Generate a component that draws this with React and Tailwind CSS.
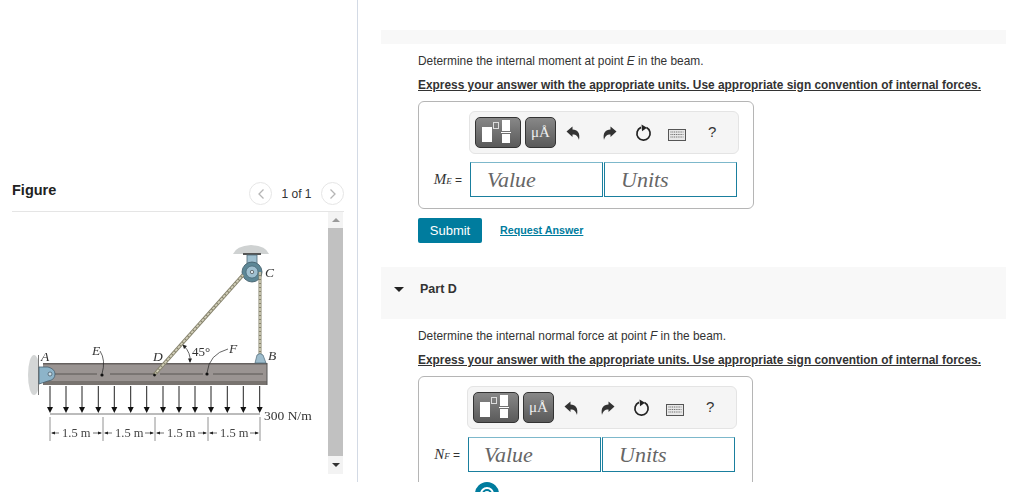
const sans = { fontFamily: '"Liberation Sans", Arial, sans-serif' };
const serif = { fontFamily: '"Liberation Serif", serif' };

const loadX = [50, 66, 82, 98.3, 114.3, 130.7, 146.7, 163, 179, 195, 211, 227.3, 243.3, 259.7];
const dimX = [50, 103, 155, 208, 260];

function BeamFigure() {
  return (
    <svg width="314" height="262" viewBox="12 212 314 262" className="blur-[0.4px] shrink-0">
      {/* wall + ceiling */}
      <ellipse cx="34" cy="375" rx="6" ry="20" fill="#d4d6d6" />
      <line x1="38.5" y1="355" x2="38.5" y2="395" stroke="#777" strokeWidth="1" />
      <path d="M233 254 Q236 246 251 245 Q266 246 269 254 Z" fill="#cfd2d2" />
      <rect x="243" y="253" width="18" height="2" fill="#555" />

      {/* beam */}
      <rect x="43" y="363" width="224" height="22" fill="#9a9492" />
      <rect x="43" y="363" width="224" height="1.5" fill="#66615f" />
      <rect x="43" y="381" width="224" height="4" fill="#78736f" />
      <line x1="267" y1="363" x2="267" y2="385" stroke="#555" />
      {[[53, 97], [110, 153], [160, 203], [213, 263]].map(([a, b]) => (
        <line key={a} x1={a} y1="374" x2={b} y2="374" stroke="#4a4645" strokeWidth="0.8" />
      ))}

      {/* bracket at A */}
      <path d="M39 367 H48 Q55 369 55 374 Q55 380 48 381 L39 384 Z" fill="#8db4c9" stroke="#47606e" strokeWidth="0.8" />
      <circle cx="50" cy="374" r="2" fill="#cfe0e8" stroke="#3e525e" strokeWidth="0.7" />

      {/* pulley */}
      <rect x="247" y="255" width="10" height="17" fill="#9fc0d0" stroke="#4f6a78" strokeWidth="0.8" />
      <circle cx="252" cy="272" r="10" fill="#5d8796" stroke="#3d5966" strokeWidth="0.8" />
      <circle cx="252" cy="272" r="6" fill="#9fc0d0" stroke="#3d5966" strokeWidth="0.6" />
      <circle cx="252" cy="272" r="1.7" fill="#dfe9ee" stroke="#333" strokeWidth="0.6" />

      {/* rope */}
      <line x1="154" y1="375" x2="243" y2="275" stroke="#85826c" strokeWidth="3.4" />
      <line x1="154" y1="375" x2="243" y2="275" stroke="#cfccb6" strokeWidth="1.8" strokeDasharray="3 1" />
      <line x1="260" y1="272" x2="260" y2="357" stroke="#85826c" strokeWidth="3" />
      <line x1="260" y1="272" x2="260" y2="357" stroke="#cfccb6" strokeWidth="1.6" strokeDasharray="3 1" />

      {/* bracket at B */}
      <path d="M255 363 L257 355 Q260 352 263 355 L266 363 Z" fill="#9dbccc" stroke="#4f6a78" strokeWidth="0.7" />

      {/* points and leaders */}
      <circle cx="102" cy="375" r="1.6" fill="#111" />
      <circle cx="154.5" cy="375" r="1.4" fill="#111" />
      <circle cx="207" cy="374" r="1.6" fill="#111" />
      <path d="M100 351 Q106 360 102 374" fill="none" stroke="#222" strokeWidth="0.7" />
      <path d="M228 349 Q209 354 207 373" fill="none" stroke="#222" strokeWidth="0.7" />
      <path d="M184 346 Q191 353 190 362" fill="none" stroke="#222" strokeWidth="0.7" />
      <path d="M182.5 344.5 L187 346 L184 349 Z M190 363 L188 358.5 L192 358.5 Z" fill="#222" />

      {/* distributed load */}
      {loadX.map((x) => (
        <g key={x}>
          <line x1={x} y1="386" x2={x} y2="408" stroke="#222" strokeWidth="1" />
          <path d={`M${x - 3} 407 H${x + 3} L${x} 413 Z`} fill="#111" />
        </g>
      ))}
      <line x1="50" y1="414" x2="260" y2="414" stroke="#555" strokeWidth="0.8" />

      {/* dimensions */}
      {dimX.map((x) => (
        <line key={x} x1={x} y1="417" x2={x} y2="441" stroke="#777" strokeWidth="0.8" />
      ))}
      {dimX.slice(0, 4).map((x, i) => (
        <g key={x}>
          <line x1={x + 2} y1="433" x2={x + 9} y2="433" stroke="#333" strokeWidth="0.7" />
          <path d={`M${x + 1} 433 l4 -1.6 v3.2 Z`} fill="#222" />
          <line x1={dimX[i + 1] - 10} y1="433" x2={dimX[i + 1] - 2} y2="433" stroke="#333" strokeWidth="0.7" />
          <path d={`M${dimX[i + 1] - 1} 433 l-4 -1.6 v3.2 Z`} fill="#222" />
          <text x={x + 12} y="437" fontFamily="Liberation Serif" fontSize="12.5" fill="#444">1.5 m</text>
        </g>
      ))}

      {/* labels */}
      <g fontFamily="Liberation Serif" fill="#333">
        <text x="41" y="361" fontSize="13.5" fontStyle="italic">A</text>
        <text x="92" y="355" fontSize="13.5" fontStyle="italic">E</text>
        <text x="153" y="361" fontSize="13.5" fontStyle="italic">D</text>
        <text x="229" y="353" fontSize="13.5" fontStyle="italic">F</text>
        <text x="268" y="360" fontSize="13.5" fontStyle="italic">B</text>
        <text x="265" y="277" fontSize="13.5" fontStyle="italic">C</text>
        <text x="192" y="356" fontSize="13">45°</text>
        <text x="264" y="420" fontSize="13.5">300 N/m</text>
      </g>
    </svg>
  );
}

function FigureScrollbar() {
  return (
    <div className="w-[15px] h-[262px] bg-[#f3f3f3] flex flex-col items-center shrink-0">
      <div className="h-4 flex items-center justify-center">
        <div className="w-0 h-0 border-x-[4px] border-x-transparent border-b-[4px] border-b-[#9a9a9a]" />
      </div>
      <div className="w-full flex-1 bg-[#c1c1c1]" />
      <div className="h-[18px] flex items-center justify-center">
        <div className="w-0 h-0 border-x-[4px] border-x-transparent border-t-[4px] border-t-[#333]" />
      </div>
    </div>
  );
}

function FigurePanel() {
  return (
    <div className="w-[358px] shrink-0 border-r border-[#d3dae5] pl-3 pr-[13px] pt-[181px]">
      <div className="flex items-center justify-between h-[31px] border-b border-[#e5e5e5] pb-[5px]">
        <span className="mb-[6px] text-[14.5px] font-bold text-[#222]">Figure</span>
        <div className="flex items-center text-[12px] text-[#333]">
          <button className="w-[23px] h-[23px] rounded-full border border-[#e6e6e6] flex items-center justify-center">
            <svg width="8" height="12" viewBox="0 0 8 12"><path d="M6.5 1.5 L2 6 L6.5 10.5" fill="none" stroke="#b5b5b5" strokeWidth="1.3" /></svg>
          </button>
          <span className="w-[49px] text-center">1 of 1</span>
          <button className="w-[23px] h-[23px] rounded-full border border-[#e6e6e6] flex items-center justify-center">
            <svg width="8" height="12" viewBox="0 0 8 12"><path d="M1.5 1.5 L6 6 L1.5 10.5" fill="none" stroke="#b5b5b5" strokeWidth="1.3" /></svg>
          </button>
        </div>
      </div>
      <div className="flex justify-between pr-px">
        <BeamFigure />
        <FigureScrollbar />
      </div>
    </div>
  );
}

function TemplateIcon() {
  return (
    <svg width="44" height="29" viewBox="0 0 44 29">
      <rect x="6" y="9" width="10" height="15" fill="#fff" />
      <rect x="17.5" y="4.5" width="5" height="6" fill="none" stroke="#ddd" strokeWidth="1" />
      <rect x="26" y="2" width="8" height="11" fill="#fff" />
      <rect x="25" y="14" width="10" height="1" fill="#fff" />
      <rect x="26" y="16" width="8" height="9" fill="#fff" />
    </svg>
  );
}

function Toolbar({ className }) {
  return (
    <div className={`h-[43px] bg-[#f5f5f5] border border-[#e4e4e4] rounded-[6px] flex items-center pl-[5px] ${className}`}>
      <div className="w-[46px] h-[31px] rounded-[5px] border border-[#333] bg-gradient-to-b from-[#888] to-[#5a5a5a] flex items-center justify-center">
        <TemplateIcon />
      </div>
      <div className="ml-1 w-[31px] h-[31px] rounded-[5px] border border-[#333] bg-gradient-to-b from-[#888] to-[#5a5a5a] flex items-center justify-center text-[#eee] text-[15px]" style={serif}>
        μÅ
      </div>
      <svg className="ml-[10px] mt-[2px]" width="16" height="16" viewBox="0 0 16 16">
        <path d="M0.5 5.5 L6.5 0.5 V3.5 C11.5 3.5 14.5 7 13 14 C12 10.5 10.5 8.5 6.5 8.5 V11 Z" fill="#333" />
      </svg>
      <svg className="ml-[19px] mt-[2px]" width="16" height="16" viewBox="0 0 16 16">
        <path d="M15.5 5.5 L9.5 0.5 V3.5 C4.5 3.5 1.5 7 3 14 C4 10.5 5.5 8.5 9.5 8.5 V11 Z" fill="#333" />
      </svg>
      <svg className="ml-[18px]" width="18" height="18" viewBox="0 0 18 18">
        <path d="M11.5 3.6 A6.6 6.6 0 1 1 6 3.4" fill="none" stroke="#222" strokeWidth="1.7" />
        <path d="M6.5 0.5 L12 3.8 L7 7.2 Z" fill="#222" />
      </svg>
      <svg className="ml-[15px] mt-1" width="18" height="12" viewBox="0 0 18 12">
        <rect x="0.5" y="0.5" width="17" height="11" fill="#e8e8e8" stroke="#555" />
        <path d="M2.5 3 H15.5 M2.5 5.5 H15.5 M2.5 8 H15.5" stroke="#666" strokeWidth="1.1" strokeDasharray="1 0.8" />
      </svg>
      <span className="ml-[22px] text-[15px] text-[#333]">?</span>
    </div>
  );
}

function AnswerBox({ symbol, sub, indent, boxClass, toolbarClass, valueClass }) {
  return (
    <div className={`border border-[#b5b5b5] rounded-[6px] pt-[9px] ${boxClass}`}>
      <Toolbar className={toolbarClass} />
      <div className={`flex items-center mt-2 ${indent}`}>
        <span className="w-[41px] text-right pr-2 text-[12px] text-[#333] whitespace-nowrap">
          <i className="text-[15px]" style={serif}>{symbol}</i>
          <i className="text-[9px]" style={serif}>{sub}</i> =
        </span>
        <div className="w-[133px] h-[35px] border border-[#1a7f9e] border-t-[#7db8cb] flex items-center">
          <span className={`text-[22px] italic text-[#666] ${valueClass}`} style={serif}>Value</span>
        </div>
        <div className="ml-px w-[133px] h-[35px] border border-[#1a7f9e] border-t-[#7db8cb] flex items-center">
          <span className="text-[22px] italic text-[#666] pl-4" style={serif}>Units</span>
        </div>
      </div>
    </div>
  );
}

const instruction = "Express your answer with the appropriate units. Use appropriate sign convention of internal forces.";

function QuestionPanel() {
  return (
    <div className="w-[625px] ml-[23px] pt-[30px]">
      <div className="h-[14px] bg-[#f8f8f8]" />
      <div className="pl-[37px]">
        <p className="mt-[11px] text-[11.9px] leading-[13px] text-[#333]">
          Determine the internal moment at point <i>E</i> in the beam.
        </p>
        <p className="mt-[11px] text-[11.9px] leading-[13px] font-bold text-[#333] underline">{instruction}</p>
        <AnswerBox
          symbol="M"
          sub="E"
          indent="pl-[10px]"
          boxClass="mt-[9px] w-[336px] h-[108px]"
          toolbarClass="ml-[50px] w-[270px]"
          valueClass="pl-4"
        />
        <div className="flex items-center mt-[9px]">
          <button className="w-16 h-[25px] bg-[#007c9e] rounded-[2px] text-[13px] text-white">Submit</button>
          <a className="ml-[18px] text-[10.7px] font-bold text-[#007c9e] underline">Request Answer</a>
        </div>
      </div>
      <div className="mt-6 h-[52px] bg-[#f8f8f8] flex items-center pl-[13px] pb-2">
        <div className="w-0 h-0 border-x-[5px] border-x-transparent border-t-[5px] border-t-[#222]" />
        <span className="ml-[16px] text-[12.5px] font-bold text-[#333]">Part D</span>
      </div>
      <div className="pl-[37px]">
        <p className="mt-[11px] text-[11.9px] leading-[13px] text-[#333]">
          Determine the internal normal force at point <i>F</i> in the beam.
        </p>
        <p className="mt-[11px] text-[11.9px] leading-[13px] font-bold text-[#333] underline">{instruction}</p>
        <AnswerBox
          symbol="N"
          sub="F"
          indent="pl-2"
          boxClass="mt-[9px] w-[335px] h-[120px]"
          toolbarClass="ml-[48px] w-[270px]"
          valueClass="pl-[15px]"
        />
      </div>
    </div>
  );
}

export default function App() {
  return (
    <div className="w-[1024px] h-[492px] overflow-hidden bg-white" style={sans}>
      <div className="flex h-[482px] overflow-hidden">
        <FigurePanel />
        <QuestionPanel />
      </div>
      <div className="flex items-start pl-[475px] h-[10px] overflow-hidden">
        <div className="w-6 h-6 rounded-full border-[5px] border-[#007c9e] shrink-0 flex items-center justify-center">
          <div className="w-[10px] h-[10px] rounded-full border-2 border-[#007c9e] shrink-0" />
        </div>
        <span className="ml-[6px] mt-[6px] text-[13px] text-[#333]">Review</span>
      </div>
    </div>
  );
}
